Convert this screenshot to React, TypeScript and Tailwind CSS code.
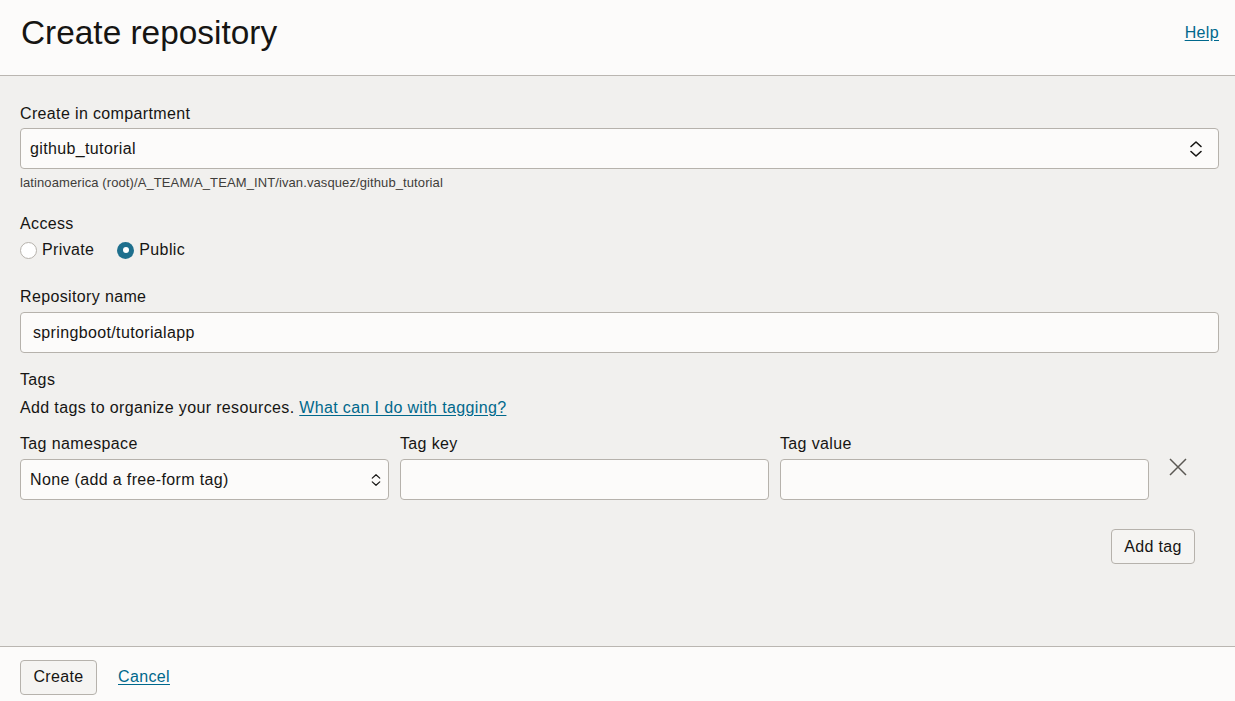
import React from "react";

function UpDown({ size = "lg" }: { size?: "lg" | "sm" }) {
  const cls = size === "lg" ? "w-[16px] h-[20px]" : "w-[12px] h-[18px]";
  return (
    <svg className={cls} viewBox="0 0 16 20" fill="none" stroke="#161513" strokeWidth="1.6" strokeLinecap="round" strokeLinejoin="round">
      <path d="M3 7.5 8 3l5 4.5" />
      <path d="M3 12.5 8 17l5-4.5" />
    </svg>
  );
}

function Label({ children }: { children: React.ReactNode }) {
  return <div className="text-[16px] leading-[20px] text-[#161513]">{children}</div>;
}

const boxClass =
  "h-[41px] w-full rounded-[4px] border border-[#b6b2ac] bg-[#fcfbfa] flex items-center text-[16px] text-[#161513]";

export default function App() {
  return (
    <div className="h-screen w-full flex flex-col bg-[#f1f0ee] font-['Liberation_Sans',Arial,sans-serif] tracking-[0.36px] text-[#161513]">
      <header className="h-[76px] shrink-0 bg-[#fcfbfa] border-b border-[#bab6b1] flex items-start justify-between pl-[21px] pr-[16px]">
        <h1 className="text-[33.4px] leading-[38px] mt-[14px] font-normal tracking-normal">Create repository</h1>
        <a href="#" className="mt-[23px] text-[16px] leading-[20px] text-[#00688c] underline underline-offset-2">
          Help
        </a>
      </header>

      <main className="flex-1 px-[20px] pt-[28px] pr-[16px]">
        <Label>Create in compartment</Label>
        <div className={`${boxClass} mt-[4px] pl-[9px] pr-[14px] justify-between`}>
          <span>github_tutorial</span>
          <UpDown />
        </div>
        <div className="mt-[6px] text-[13px] leading-[16px] tracking-[0.1px] text-[#3f3d3a]">
          latinoamerica (root)/A_TEAM/A_TEAM_INT/ivan.vasquez/github_tutorial
        </div>

        <div className="mt-[23px]">
          <Label>Access</Label>
          <div className="mt-[6px] flex items-center text-[16px] leading-[20px]">
            <span className="w-[17px] h-[17px] rounded-full border border-[#b6b2ac] bg-white" />
            <span className="ml-[5px]">Private</span>
            <span className="ml-[23px] w-[17px] h-[17px] rounded-full bg-[#1e6f8d] flex items-center justify-center">
              <span className="w-[6px] h-[6px] rounded-full bg-white" />
            </span>
            <span className="ml-[5px]">Public</span>
          </div>
        </div>

        <div className="mt-[27px]">
          <Label>Repository name</Label>
          <div className={`${boxClass} mt-[5px] pl-[12px]`}>springboot/tutorialapp</div>
        </div>

        <div className="mt-[17px]">
          <Label>Tags</Label>
          <div className="mt-[8px] text-[16px] leading-[20px]">
            Add tags to organize your resources.{" "}
            <a href="#" className="text-[#00688c] underline underline-offset-2">
              What can I do with tagging?
            </a>
          </div>
        </div>

        <div className="mt-[16px] flex items-start gap-[11px]">
          <div className="flex-1">
            <Label>Tag namespace</Label>
            <div className={`${boxClass} mt-[5px] pl-[9px] pr-[6px] justify-between`}>
              <span>None (add a free-form tag)</span>
              <UpDown size="sm" />
            </div>
          </div>
          <div className="flex-1">
            <Label>Tag key</Label>
            <div className={`${boxClass} mt-[5px]`} />
          </div>
          <div className="flex-1">
            <Label>Tag value</Label>
            <div className={`${boxClass} mt-[5px]`} />
          </div>
          <div className="w-[59px] shrink-0 pt-[24px] pl-[9px]">
            <button type="button" className="w-[18px] h-[18px] block">
              <svg viewBox="0 0 18 18" className="w-[18px] h-[18px]" stroke="#5b5853" strokeWidth="1.5">
                <path d="M1 1l16 16M17 1 1 17" />
              </svg>
            </button>
          </div>
        </div>

        <div className="mt-[29px] flex justify-end pr-[24px]">
          <button
            type="button"
            className="h-[35px] w-[84px] rounded-[4px] border border-[#b6b2ac] bg-[#f5f4f2] text-[16px] text-[#161513]"
          >
            Add tag
          </button>
        </div>
      </main>

      <footer className="h-[55px] shrink-0 bg-[#fcfbfa] border-t border-[#bab6b1] flex items-center pl-[20px] pt-[6px]">
        <button
          type="button"
          className="h-[35px] w-[77px] rounded-[4px] border border-[#b6b2ac] bg-[#f5f4f2] text-[16px] text-[#161513]"
        >
          Create
        </button>
        <a href="#" className="ml-[21px] text-[16px] text-[#00688c] underline underline-offset-2">
          Cancel
        </a>
      </footer>
    </div>
  );
}
